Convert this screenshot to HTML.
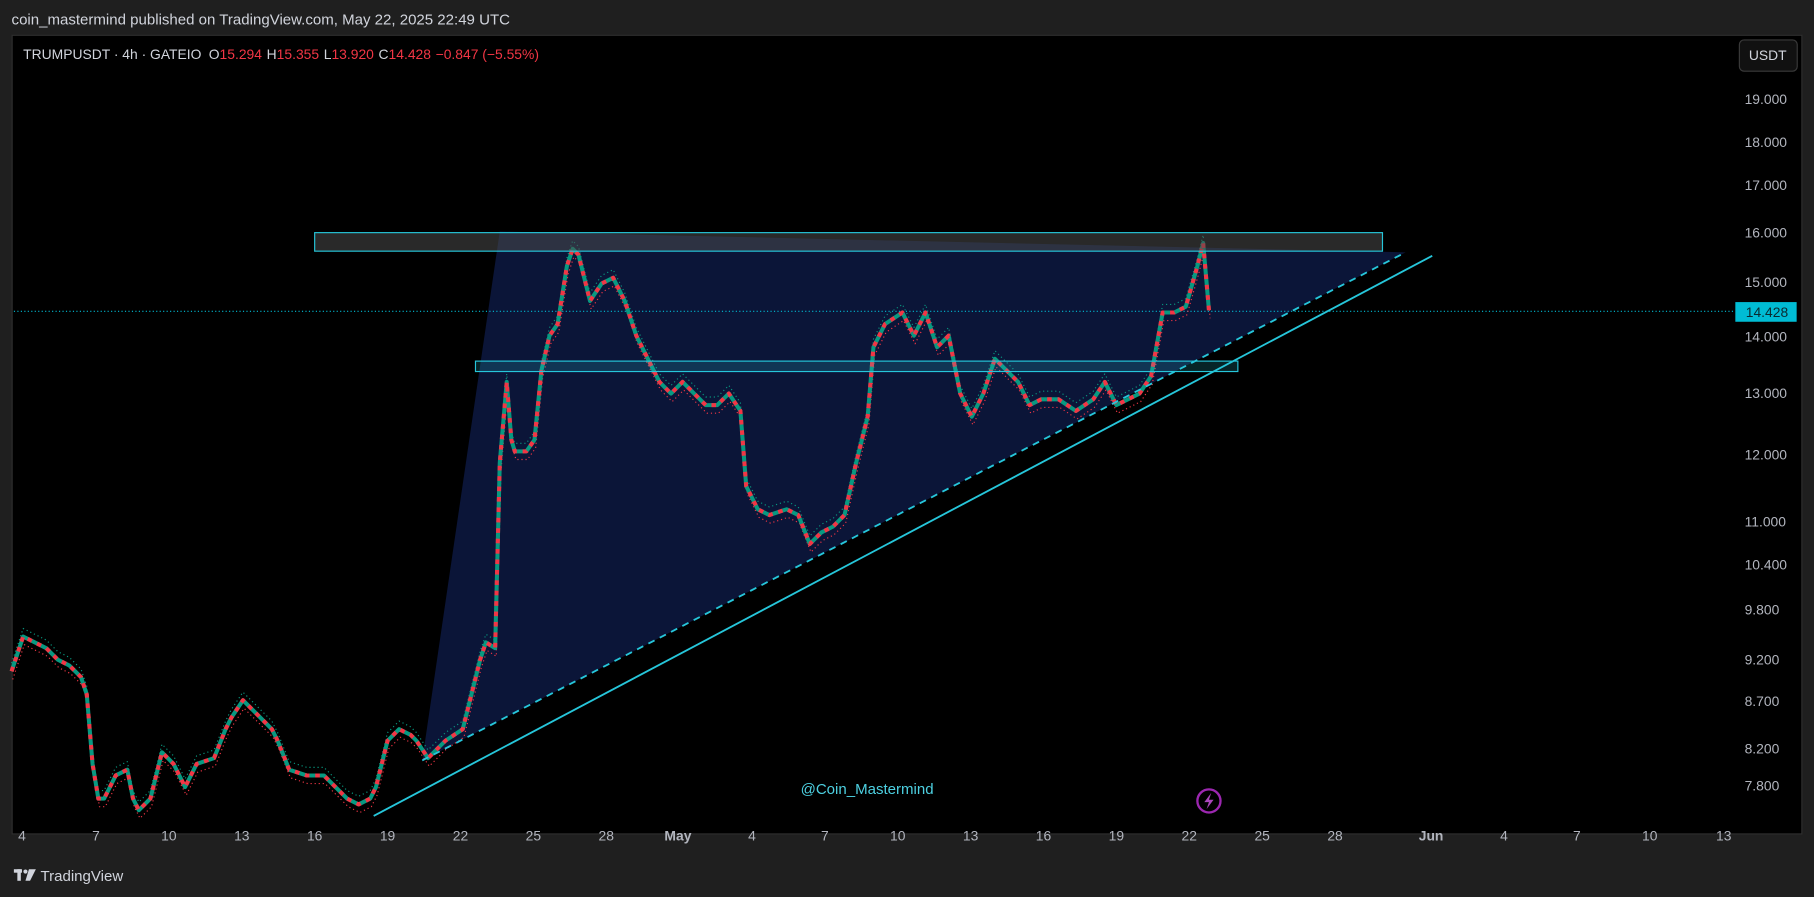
<!DOCTYPE html>
<html><head><meta charset="utf-8"><style>
html,body{margin:0;padding:0;background:#1f1f1f;width:1814px;height:897px;overflow:hidden}
svg{display:block}
text{font-family:"Liberation Sans",sans-serif}
</style></head><body>
<svg width="1814" height="897" viewBox="0 0 1568 775" preserveAspectRatio="none" xmlns="http://www.w3.org/2000/svg" xmlns:xlink="http://www.w3.org/1999/xlink">
<rect x="0" y="0" width="1568" height="775" fill="#1f1f1f"/>
<text x="10" y="21" font-size="13" fill="#d1d4dc">coin_mastermind published on TradingView.com, May 22, 2025 22:49 UTC</text>
<rect x="10.5" y="30.5" width="1547" height="690" fill="#000" stroke="#2e2e2e"/>
<polygon points="365,657 432,200 1215,218" fill="#0b1538"/>
<line x1="12" y1="269" x2="1500" y2="269" stroke="#00bcd4" stroke-width="1" stroke-dasharray="1,2"/>
<defs>
<polyline id="p" points="10,580 20,550 30,555 40,560 50,570 60,575 70,585 75,600 80,660 85,690 90,690 95,680 100,670 110,665 115,690 120,700 125,695 130,690 140,650 145,655 150,660 160,680 170,660 185,655 195,630 200,620 210,605 225,620 235,630 240,640 250,665 265,670 280,670 290,680 300,690 310,695 320,690 325,680 335,640 345,630 355,635 360,640 370,655 385,640 400,630 410,590 415,570 420,555 428,560 432,400 438,330 442,380 445,390 455,390 462,380 468,320 475,290 482,280 490,230 495,215 500,220 505,240 510,260 520,245 530,240 540,260 550,290 560,310 570,330 580,340 590,330 600,340 610,350 620,350 630,340 640,355 645,420 655,440 665,445 680,440 690,445 700,470 710,460 720,455 730,445 740,400 750,360 755,300 765,280 780,270 790,290 800,270 810,300 820,290 830,340 840,360 850,340 860,310 870,320 880,330 890,350 900,345 915,345 930,355 945,345 955,330 965,350 975,345 985,340 995,325 1005,270 1015,270 1025,265 1035,230 1040,210 1045,268"/>
</defs>
<g fill="none" stroke-linejoin="round">
<use xlink:href="#p" href="#p" stroke="#089981" stroke-width="1" stroke-dasharray="1,2.5" transform="translate(0,-7)"/>
<use xlink:href="#p" href="#p" stroke="#f23645" stroke-width="1" stroke-dasharray="1,2.5" transform="translate(1,7)"/>
<use xlink:href="#p" href="#p" stroke="#089981" stroke-width="3.5"/>
<use xlink:href="#p" href="#p" stroke="#f23645" stroke-width="3.5" stroke-dasharray="4,5"/>
</g>
<rect x="272" y="201" width="923" height="16" fill="#4a4a4a" fill-opacity="0.55" stroke="#26c6da" stroke-width="1"/>
<rect x="411" y="312" width="659" height="9" fill="#26c6da" fill-opacity="0.18" stroke="#26c6da" stroke-width="1"/>
<line x1="365" y1="657" x2="1215" y2="218" stroke="#26c6da" stroke-width="1.6" stroke-dasharray="6,5"/>
<line x1="323" y1="705" x2="1238" y2="221" stroke="#26c6da" stroke-width="1.6"/>
<text x="20" y="51" font-size="12" fill="#d1d4dc">TRUMPUSDT · 4h · GATEIO <tspan dx="3">O</tspan><tspan fill="#f23645">15.294</tspan><tspan dx="4">H</tspan><tspan fill="#f23645">15.355</tspan><tspan dx="4">L</tspan><tspan fill="#f23645">13.920</tspan><tspan dx="4">C</tspan><tspan fill="#f23645">14.428</tspan><tspan dx="4" fill="#f23645">−0.847 (−5.55%)</tspan></text>
<rect x="1503.5" y="34.5" width="50" height="27" rx="4" fill="#111" stroke="#3a3a3a"/>
<text x="1528" y="52" font-size="12" fill="#d1d4dc" text-anchor="middle">USDT</text>
<g font-size="12" fill="#b2b5be">
<text x="1508" y="90">19.000</text><text x="1508" y="127">18.000</text><text x="1508" y="164">17.000</text>
<text x="1508" y="205">16.000</text><text x="1508" y="248">15.000</text><text x="1508" y="295">14.000</text>
<text x="1508" y="344">13.000</text><text x="1508" y="397">12.000</text><text x="1508" y="455">11.000</text>
<text x="1508" y="492">10.400</text><text x="1508" y="531">9.800</text><text x="1508" y="574">9.200</text>
<text x="1508" y="610">8.700</text><text x="1508" y="651">8.200</text><text x="1508" y="683">7.800</text>
</g>
<rect x="1500" y="261" width="53" height="17" fill="#00bcd4"/>
<text x="1509" y="274" font-size="12" fill="#0a2a30">14.428</text>
<g font-size="12" fill="#b2b5be" text-anchor="middle">
<text x="19" y="726">4</text><text x="83" y="726">7</text><text x="146" y="726">10</text><text x="209" y="726">13</text><text x="272" y="726">16</text><text x="335" y="726">19</text><text x="398" y="726">22</text><text x="461" y="726">25</text><text x="524" y="726">28</text><text x="586" y="726" font-weight="bold">May</text><text x="650" y="726">4</text><text x="713" y="726">7</text><text x="776" y="726">10</text><text x="839" y="726">13</text><text x="902" y="726">16</text><text x="965" y="726">19</text><text x="1028" y="726">22</text><text x="1091" y="726">25</text><text x="1154" y="726">28</text><text x="1237" y="726" font-weight="bold">Jun</text><text x="1300" y="726">4</text><text x="1363" y="726">7</text><text x="1426" y="726">10</text><text x="1490" y="726">13</text>
</g>
<text x="692" y="686" font-size="13" fill="#4dd0e1">@Coin_Mastermind</text>
<circle cx="1045" cy="692" r="10" fill="none" stroke="#9c27b0" stroke-width="2"/>
<path d="M1047,685 L1041,693 L1045,693 L1043,699 L1049,691 L1045,691 Z" fill="#ab47bc"/>
<g fill="#d1d4dc"><rect x="12" y="751" width="7" height="3"/><rect x="15" y="751" width="3" height="10"/><circle cx="22" cy="753" r="1.8"/><path d="M25,751 L31,751 L26,761 L22,761 Z"/></g>
<text x="35" y="761" font-size="13" fill="#d1d4dc">TradingView</text>
</svg>
</body></html>
